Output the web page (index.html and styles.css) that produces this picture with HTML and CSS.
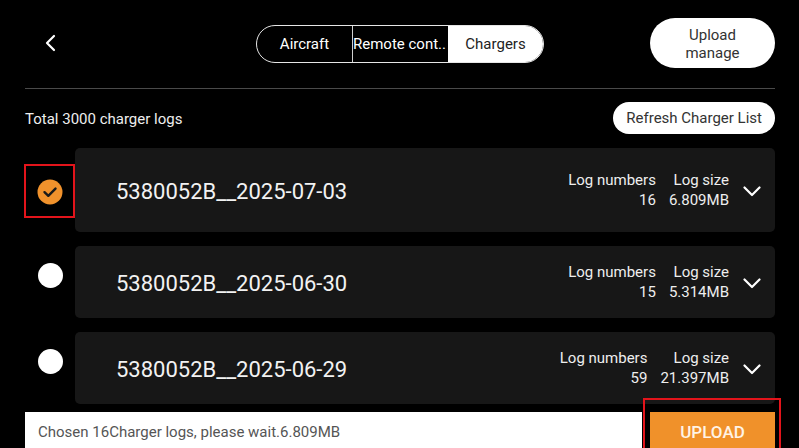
FILE: index.html
```html
<!DOCTYPE html>
<html>
<head>
<meta charset="utf-8">
<link rel="stylesheet" href="styles.css">
</head>
<body>
<div class="page">
  <header class="header">
    <div class="back">
      <svg width="12" height="18" viewBox="0 0 12 18"><path d="M10 2 L3 9 L10 16" fill="none" stroke="#fff" stroke-width="2.2" stroke-linecap="round" stroke-linejoin="round"/></svg>
    </div>
    <div class="seg">
      <div class="seg-item">Aircraft</div>
      <div class="seg-item seg-mid">Remote cont..</div>
      <div class="seg-item seg-active">Chargers</div>
    </div>
    <div class="right">
      <button class="upload-manage">Upload<br>manage</button>
    </div>
  </header>

  <div class="toolbar">
    <span class="total">Total 3000 charger logs</span>
    <button class="refresh">Refresh Charger List</button>
  </div>

  <div class="list">
    <div class="row row-first">
      <div class="check-col">
        <div class="check-box">
          <svg width="26" height="26" viewBox="0 0 26 26"><circle cx="13" cy="13" r="12.5" fill="#f1922c"/><path d="M7.5 13.2 L11.3 16.8 L18.5 9.6" fill="none" stroke="#1a1a1a" stroke-width="2.4" stroke-linecap="round" stroke-linejoin="round"/></svg>
        </div>
      </div>
      <div class="card card-tall">
        <div class="title">5380052B__2025-07-03</div>
        <div class="stats">
          <span>Log numbers</span><span>Log size</span>
          <span>16</span><span>6.809MB</span>
        </div>
        <svg class="chev" width="18" height="11" viewBox="0 0 18 11"><path d="M1.5 1.5 L9 9 L16.5 1.5" fill="none" stroke="#fff" stroke-width="2.2" stroke-linecap="round" stroke-linejoin="round"/></svg>
      </div>
    </div>

    <div class="row">
      <div class="check-col">
        <div class="radio"></div>
      </div>
      <div class="card">
        <div class="title">5380052B__2025-06-30</div>
        <div class="stats">
          <span>Log numbers</span><span>Log size</span>
          <span>15</span><span>5.314MB</span>
        </div>
        <svg class="chev" width="18" height="11" viewBox="0 0 18 11"><path d="M1.5 1.5 L9 9 L16.5 1.5" fill="none" stroke="#fff" stroke-width="2.2" stroke-linecap="round" stroke-linejoin="round"/></svg>
      </div>
    </div>

    <div class="row">
      <div class="check-col">
        <div class="radio"></div>
      </div>
      <div class="card">
        <div class="title">5380052B__2025-06-29</div>
        <div class="stats">
          <span>Log numbers</span><span>Log size</span>
          <span>59</span><span>21.397MB</span>
        </div>
        <svg class="chev" width="18" height="11" viewBox="0 0 18 11"><path d="M1.5 1.5 L9 9 L16.5 1.5" fill="none" stroke="#fff" stroke-width="2.2" stroke-linecap="round" stroke-linejoin="round"/></svg>
      </div>
    </div>
  </div>

  <div class="bottom">
    <div class="status">Chosen 16Charger logs, please wait.6.809MB</div>
    <div class="upload-wrap">
      <button class="upload">UPLOAD</button>
    </div>
  </div>
</div>
</body>
</html>
```

FILE: styles.css
```css
* { box-sizing: border-box; }
html, body {
  margin: 0;
  padding: 0;
  background: #000;
  width: 799px;
  height: 448px;
  overflow: hidden;
  font-family: Roboto, "Noto Sans", "Liberation Sans", sans-serif;
  color: #fff;
}
button {
  font-family: inherit;
  border: none;
  cursor: pointer;
}
.page {
  padding: 0 24px 0 25px;
}
.header {
  height: 89px;
  border-bottom: 1px solid #4a4a4a;
  display: grid;
  grid-template-columns: 1fr auto 1fr;
  align-items: center;
  padding-bottom: 2px;
}
.back {
  padding-left: 19px;
  display: flex;
  align-items: center;
  height: 20px;
}
.seg {
  display: flex;
  height: 38px;
  border: 1.5px solid #e6e6e6;
  border-radius: 19px;
  overflow: hidden;
  margin-top: 1px;
}
.seg-item {
  width: 95px;
  display: flex;
  align-items: center;
  justify-content: center;
  font-size: 15px;
  color: #fff;
  white-space: nowrap;
  overflow: hidden;
}
.seg-mid {
  border-left: 1.5px solid #d0d0d0;
  justify-content: flex-start;
  padding-left: 0;
  width: 96px;
}
.seg-active {
  background: #fff;
  color: #222;
}
.right {
  display: flex;
  justify-content: flex-end;
}
.upload-manage {
  width: 125px;
  height: 50px;
  border-radius: 25px;
  background: #fff;
  color: #333;
  font-size: 15px;
  line-height: 18px;
  padding: 2px 0 0 0;
  margin-top: -1px;
}
.toolbar {
  display: flex;
  justify-content: space-between;
  align-items: center;
  margin-top: 13px;
  height: 32px;
}
.total {
  font-size: 15px;
  color: #eee;
  padding-top: 2px;
}
.refresh {
  height: 32px;
  border-radius: 16px;
  background: #fff;
  color: #333;
  font-size: 15px;
  padding: 0 13px;
}
.list {
  margin-top: 14px;
  display: flex;
  flex-direction: column;
  gap: 14px;
}
.row {
  display: flex;
  align-items: flex-start;
}
.check-col {
  width: 50px;
  display: flex;
  justify-content: center;
  padding-top: 17px;
}
.row-first .check-col {
  padding-top: 16px;
  justify-content: flex-start;
}
.check-box {
  width: 52px;
  height: 54px;
  margin-left: -1px;
  border: 2px solid #e3141b;
  display: flex;
  align-items: center;
  justify-content: center;
}
.check-box svg { margin-top: 1px; }
.radio {
  width: 25px;
  height: 25px;
  border-radius: 50%;
  background: #fff;
}
.card {
  flex: 1;
  height: 72px;
  background: #171717;
  border-radius: 5px;
  display: flex;
  align-items: center;
  padding: 0 14px 0 41px;
}
.card-tall { height: 84px; }
.title {
  flex: 1;
  font-size: 22px;
  color: #f2f2f2;
  padding-top: 3px;
}
.stats {
  display: grid;
  grid-template-columns: auto auto;
  column-gap: 13px;
  row-gap: 2px;
  text-align: right;
  font-size: 15px;
  color: #eee;
  line-height: 18px;
}
.chev { margin-left: 14px; margin-top: 2px; }
.bottom {
  margin-top: 8px;
  display: flex;
  height: 36px;
}
.status {
  flex: 1;
  background: #fff;
  color: #555;
  font-size: 15px;
  padding: 11px 0 0 13px;
}
.upload-wrap {
  position: relative;
  width: 133px;
  padding-left: 8px;
}
.upload-wrap::before {
  content: "";
  position: absolute;
  left: 1px;
  right: -6px;
  top: -14px;
  bottom: 0;
  border: 2px solid #e3141b;
  border-bottom: none;
  pointer-events: none;
}
.upload {
  width: 125px;
  height: 36px;
  background: #f0912a;
  color: #fff3e6;
  font-size: 17px;
  font-weight: 500;
  padding: 4px 0 0 0;
}
```
